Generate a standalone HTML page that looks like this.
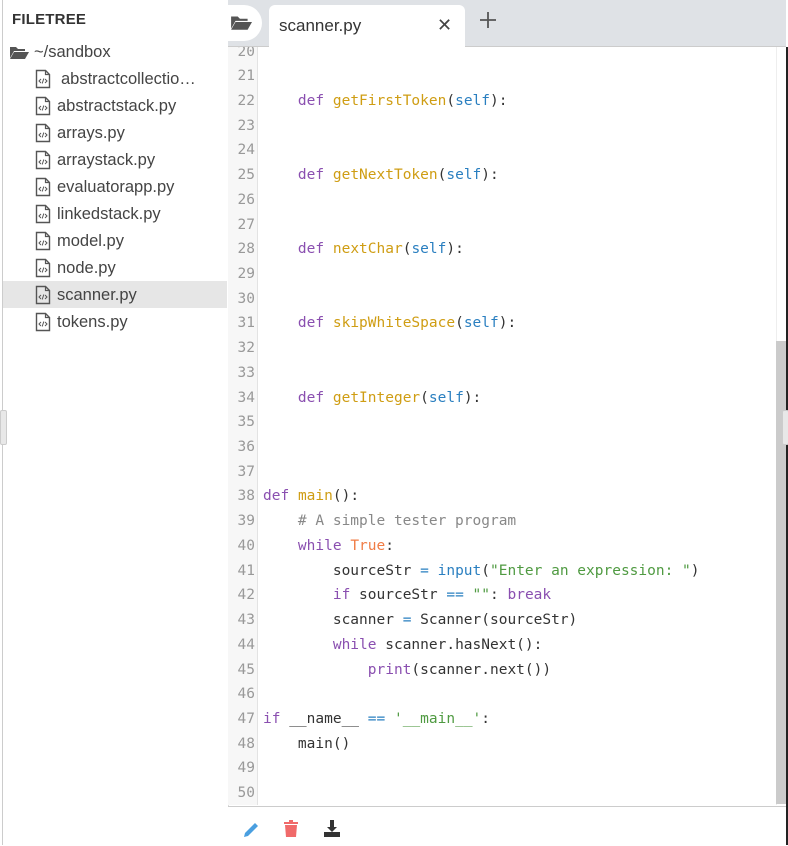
<!DOCTYPE html><html><head><style>
body{margin:0;width:788px;height:845px;position:relative;overflow:hidden;background:#fff;font-family:"Liberation Sans",sans-serif}
.side{position:absolute;left:2px;top:0;width:225px;height:845px;border-left:1px solid #ccc;border-right:1px solid #ddd;background:#fff}
.side h1{margin:0;position:absolute;left:9px;top:11px;font-size:15px;font-weight:bold;color:#333;letter-spacing:.2px}
.row{position:absolute;left:0;width:224px;height:27px;font-size:16.5px;color:#444;line-height:27px}
.row.sel{background:#e6e6e6}
.row svg{position:absolute;top:4px}
.row span{position:absolute;left:54px;top:1px}
.tabbar{position:absolute;left:228px;top:0;width:558px;height:46px;background:#dfe2e6;border-bottom:1px solid #ccc}
.tab{position:absolute;left:41px;top:5px;width:196px;height:42px;background:#fff;border-radius:6px 6px 0 0;font-size:17px;color:#333}
.code{position:absolute;left:228px;top:47px;width:548px;height:758px;overflow:hidden;font-family:"DejaVu Sans Mono",monospace;font-size:14.5px}
.gut{position:absolute;left:0;top:0;width:29px;height:758px;background:#f7f7f7;border-right:1px solid #e3e3e3}
.ln{position:absolute;left:0;width:27px;text-align:right;color:#999;height:24.72px;line-height:24.72px}
.tx{position:absolute;left:35px;white-space:pre;color:#333;height:24.72px;line-height:24.72px}
.k{color:#8a4fb0}.f{color:#cf9d13}.s{color:#2a7fc0}.c{color:#888}.t{color:#f07c45}.g{color:#4f9a41}.o{color:#2a7fc0}
.foot{position:absolute;left:228px;top:806px;width:558px;height:39px;border-top:1px solid #ccc;background:#fff}
</style></head><body>
<div class="side">
<h1>FILETREE</h1>
<div class="row" style="top:38px"><svg style="left:6px;top:7px" width="20" height="14" viewBox="0 0 20 14"><path d="M1 2h6l2 2h7v2H5L1 13z" fill="#555"/><path d="M5 7h15l-4 7H1z" fill="#555"/></svg><span style="left:31px">~/sandbox</span></div>
</div>
<div id="files"></div>
<div class="tabbar">
<div style="position:absolute;left:-10px;top:5px;width:44px;height:36px;background:#fff;border-radius:0 18px 18px 0"></div>
<svg style="position:absolute;left:2px;top:14px" width="22" height="16" viewBox="0 0 20 14"><path d="M1 2h6l2 2h7v2H5L1 13z" fill="#555"/><path d="M5 7h15l-4 7H1z" fill="#555"/></svg>
<div class="tab"><span style="position:absolute;left:10px;top:11px">scanner.py</span><span style="position:absolute;left:168px;top:10px;font-size:18px;color:#444">✕</span></div>
<svg style="position:absolute;left:252px;top:12px" width="16" height="16" viewBox="0 0 16 16"><path d="M8 0v16M0 8h16" stroke="#555" stroke-width="1.8"/></svg>
</div>
<div class="code"><div class="gut"></div><div id="lines"></div></div>
<div style="position:absolute;left:776px;top:47px;width:10px;height:758px;background:#fff;border-left:1px solid #eee"></div>
<div style="position:absolute;left:776px;top:341px;width:10px;height:463px;background:#cbcbcb"></div>
<div style="position:absolute;left:786px;top:47px;width:2px;height:798px;background:#222"></div>
<div style="position:absolute;left:782px;top:410px;width:5px;height:33px;background:#e8e8e8;border:1px solid #ccc;border-radius:2px"></div>
<div style="position:absolute;left:0;top:410px;width:5px;height:33px;background:#e8e8e8;border:1px solid #ccc;border-radius:2px"></div>
<div class="foot">
<svg style="position:absolute;left:14px;top:14px" width="18" height="18" viewBox="0 0 18 18"><path d="M2 16l1-4L13 2l3 3L6 15z" fill="#4a9fe0"/></svg>
<svg style="position:absolute;left:55px;top:13px" width="16" height="18" viewBox="0 0 16 18"><rect x="1" y="2" width="14" height="2" fill="#f06a6a"/><rect x="6" y="0" width="4" height="2" fill="#f06a6a"/><path d="M2 5h12l-1 12H3z" fill="#f06a6a"/></svg>
<svg style="position:absolute;left:95px;top:13px" width="18" height="18" viewBox="0 0 18 18"><path d="M7 0h4v7h3l-5 5-5-5h3z" fill="#333"/><rect x="1" y="12" width="16" height="5" fill="#333"/></svg>
</div>
<script>
var files=["abstractcollectio…","abstractstack.py","arrays.py","arraystack.py","evaluatorapp.py","linkedstack.py","model.py","node.py","scanner.py","tokens.py"];
var h="";files.forEach(function(f,i){var y=65+27*i;h+='<div class="row'+(f=="scanner.py"?' sel':'')+'" style="top:'+y+'px;left:3px"><svg style="left:32px" width="16" height="20" viewBox="0 0 16 20"><path d="M1.5 1.5h9l4 4v13h-13z" fill="none" stroke="#555" stroke-width="1.4"/><path d="M10.5 1.5v4h4" fill="none" stroke="#555" stroke-width="1.2"/><path d="M6 10l-2 2 2 2M10 10l2 2-2 2M8.8 9.5l-1.6 5" fill="none" stroke="#555" stroke-width="1"/></svg><span'+(i==0?' style="left:58px"':'')+'>'+f+'</span></div>';});
document.getElementById("files").innerHTML=h;
var L={22:'    <span class=k>def</span> <span class=f>getFirstToken</span>(<span class=s>self</span>):',
25:'    <span class=k>def</span> <span class=f>getNextToken</span>(<span class=s>self</span>):',
28:'    <span class=k>def</span> <span class=f>nextChar</span>(<span class=s>self</span>):',
31:'    <span class=k>def</span> <span class=f>skipWhiteSpace</span>(<span class=s>self</span>):',
34:'    <span class=k>def</span> <span class=f>getInteger</span>(<span class=s>self</span>):',
38:'<span class=k>def</span> <span class=f>main</span>():',
39:'    <span class=c># A simple tester program</span>',
40:'    <span class=k>while</span> <span class=t>True</span>:',
41:'        sourceStr <span class=o>=</span> <span class=o>input</span>(<span class=g>"Enter an expression: "</span>)',
42:'        <span class=k>if</span> sourceStr <span class=o>==</span> <span class=g>""</span>: <span class=k>break</span>',
43:'        scanner <span class=o>=</span> Scanner(sourceStr)',
44:'        <span class=k>while</span> scanner.hasNext():',
45:'            <span class=k>print</span>(scanner.next())',
47:'<span class=k>if</span> __name__ <span class=o>==</span> <span class=g>\'__main__\'</span>:',
48:'    main()'};
var c="";for(var n=20;n<=50;n++){var y=(n-20)*24.72-7.5;c+='<div class="ln" style="top:'+y+'px">'+n+'</div>'+(L[n]?'<div class="tx" style="top:'+y+'px">'+L[n]+'</div>':'');}
document.getElementById("lines").innerHTML=c;
</script>
</body></html>
